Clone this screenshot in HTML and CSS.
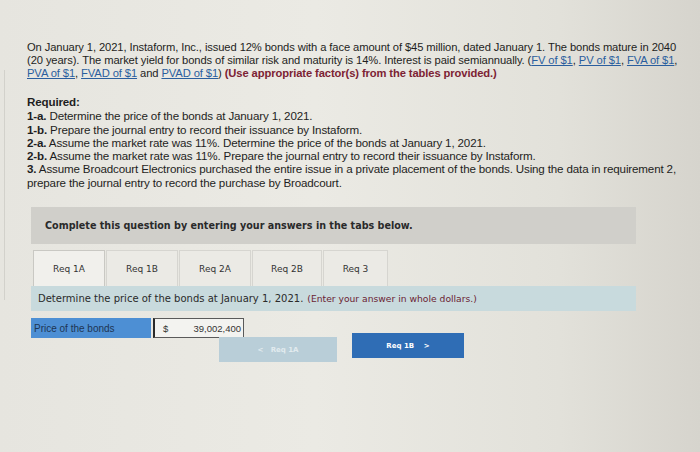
FILE: index.html
```html
<!DOCTYPE html>
<html>
<head>
<meta charset="utf-8">
<link rel="stylesheet" href="styles.css">
</head>
<body>
<div class="page">
  <div class="side"></div>
  <div class="content">
    <p class="intro">
      <span class="line">On January 1, 2021, Instaform, Inc., issued 12% bonds with a face amount of $45 million, dated January 1. The bonds mature in 2040</span>
      <span class="line">(20 years). The market yield for bonds of similar risk and maturity is 14%. Interest is paid semiannually. (<a class="lnk">FV of $1</a>, <a class="lnk">PV of $1</a>, <a class="lnk">FVA of $1</a>,</span>
      <span class="line"><a class="lnk">PVA of $1</a>, <a class="lnk">FVAD of $1</a> and <a class="lnk">PVAD of $1</a>) <b class="warn">(Use appropriate factor(s) from the tables provided.)</b></span>
    </p>
    <div class="req">
      <div class="req-title">Required:</div>
      <div class="line"><b>1-a.</b> Determine the price of the bonds at January 1, 2021.</div>
      <div class="line"><b>1-b.</b> Prepare the journal entry to record their issuance by Instaform.</div>
      <div class="line"><b>2-a.</b> Assume the market rate was 11%. Determine the price of the bonds at January 1, 2021.</div>
      <div class="line"><b>2-b.</b> Assume the market rate was 11%. Prepare the journal entry to record their issuance by Instaform.</div>
      <div class="line"><b>3.</b> Assume Broadcourt Electronics purchased the entire issue in a private placement of the bonds. Using the data in requirement 2,</div>
      <div class="line">prepare the journal entry to record the purchase by Broadcourt.</div>
    </div>
    <div class="question">
      <div class="banner">Complete this question by entering your answers in the tabs below.</div>
      <div class="tabs">
        <div class="tab active">Req 1A</div>
        <div class="tab">Req 1B</div>
        <div class="tab">Req 2A</div>
        <div class="tab t4">Req 2B</div>
        <div class="tab t5">Req 3</div>
      </div>
      <div class="instr">Determine the price of the bonds at January 1, 2021. <span class="note">(Enter your answer in whole dollars.)</span></div>
      <div class="answer">
        <div class="label">Price of the bonds</div>
        <div class="field"><span class="cur">$</span><span class="val">39,002,400</span></div>
      </div>
      <div class="nav">
        <div class="btn prev">&lt;&nbsp;&nbsp;&nbsp;Req 1A</div>
        <div class="btn next">Req 1B&nbsp;&nbsp;&nbsp;&nbsp;&gt;</div>
      </div>
    </div>
  </div>
</div>
</body>
</html>
```
FILE: styles.css
```css
html, body {
  margin: 0;
  padding: 0;
}
body {
  width: 700px;
  height: 452px;
  overflow: hidden;
  background: linear-gradient(90deg, #e6e5df 0%, #ebeae4 45%, #e2e1da 80%, #d6d4cd 100%);
  font-family: "Liberation Sans", Arial, sans-serif;
  color: #1e1e22;
}
.page {
  display: flex;
  height: 452px;
}
.side {
  width: 4px;
  margin-top: 70px;
  height: 230px;
  border-right: 1px solid #d2d1cb;
}
.content {
  padding: 41px 0 0 22px;
  flex: 1;
}
.intro {
  margin: 0;
  font-size: 11.2px;
  line-height: 13px;
  letter-spacing: -0.1px;
}
.line {
  display: block;
  white-space: nowrap;
}
.lnk {
  color: #2a5e9e;
  text-decoration: underline;
}
.warn {
  color: #7c2233;
}
.req {
  margin-top: 15px;
  font-size: 11.6px;
  line-height: 13.3px;
  letter-spacing: -0.15px;
}
.req-title {
  font-weight: bold;
  margin-bottom: 1px;
}
.question {
  margin-top: 18px;
  margin-left: 4px;
  width: 605px;
  font-family: "DejaVu Sans", Verdana, sans-serif;
}
.banner {
  background: #d0cfca;
  height: 37px;
  display: flex;
  align-items: center;
  padding-left: 14px;
  font-size: 9.6px;
  font-weight: bold;
  color: #2a2a2a;
}
.tabs {
  display: flex;
  margin-top: 6px;
  margin-left: 2px;
  height: 36px;
}
.tab {
  width: 70px;
  border: 1px solid #d6d5d0;
  border-bottom: none;
  margin-right: 1px;
  display: flex;
  align-items: center;
  justify-content: center;
  font-size: 9px;
  color: #333;
  background: #ebeae5;
}
.tab.t4 {
  width: 68px;
}
.tab.t5 {
  width: 63px;
}
.tab.active {
  background: #f1f0ec;
  border-color: #c9c8c3;
}
.instr {
  background: #c8dadd;
  height: 25px;
  display: flex;
  align-items: center;
  padding-left: 7px;
  font-size: 10px;
  color: #2a2a2a;
}
.note {
  color: #6b2333;
  font-size: 9.2px;
  margin-left: 4px;
}
.answer {
  display: flex;
  margin-top: 7px;
  height: 20px;
}
.label {
  width: 117px;
  background: #4d8fd4;
  color: #1d3553;
  font-size: 10px;
  display: flex;
  align-items: center;
  padding-left: 3px;
  font-family: "Liberation Sans", Arial, sans-serif;
}
.field {
  box-sizing: border-box;
  width: 91px;
  margin-left: 2px;
  background: #f3f3f0;
  border: 1px solid #5a5a5a;
  border-left: 2px solid #2a2a2a;
  display: flex;
  align-items: center;
  justify-content: space-between;
  padding: 0 2px 0 8px;
  font-family: "Liberation Sans", Arial, sans-serif;
  font-size: 9.5px;
  color: #333;
}
.nav {
  display: flex;
  margin-left: 188px;
  gap: 15px;
}
.btn {
  width: 118px;
  height: 25px;
  display: flex;
  align-items: center;
  justify-content: center;
  font-size: 7px;
  font-weight: bold;
  color: #fff;
}
.btn.prev {
  background: #b9ced8;
  color: #e2ebef;
  margin-top: -1px;
}
.btn.next {
  width: 112px;
  background: #2f6db5;
  margin-top: -5px;
}
```
